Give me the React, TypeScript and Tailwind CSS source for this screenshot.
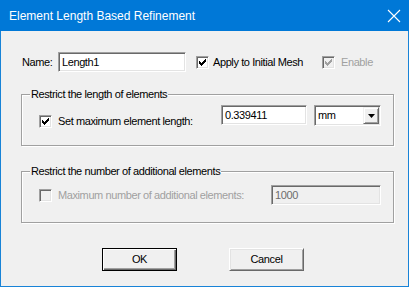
import React from 'react';

// Classic Win32 dialog — sunken edits, etched group boxes, raised buttons.
const sunken =
  'border border-t-[#a0a0a0] border-l-[#a0a0a0] border-b-white border-r-white shadow-[inset_1px_1px_0_#696969,inset_-1px_-1px_0_#e3e3e3]';

function Check({ checked, disabled }: { checked?: boolean; disabled?: boolean }) {
  return (
    <span
      className={`flex h-[13px] w-[13px] shrink-0 items-center justify-center ${sunken} ${
        disabled ? 'bg-[#f0f0f0]' : 'bg-white'
      }`}
    >
      {checked && (
        <svg width="7" height="7" viewBox="0 0 7 7">
          <path
            d="M0 2h1v1h1v1h1V3h1V2h1V1h1V0h1v3H6v1H5v1H4v1H3v1H2V6H1V5H0z"
            fill={disabled ? '#a0a0a0' : '#000'}
          />
        </svg>
      )}
    </span>
  );
}

function Group({ label, children }: { label: string; children: React.ReactNode }) {
  return (
    <div className="relative h-[52px] w-[373px] border border-[#a0a0a0] shadow-[inset_1px_1px_0_white,1px_1px_0_white]">
      <span className="absolute -top-[8px] left-[8px] bg-[#f0f0f0] px-[1px] leading-[14px] text-black">
        {label}
      </span>
      {children}
    </div>
  );
}

function Button({ label, isDefault }: { label: string; isDefault?: boolean }) {
  return (
    <button
      type="button"
      className={`flex h-[23px] w-[75px] items-center justify-center bg-[#f0f0f0] ${
        isDefault
          ? 'border border-black shadow-[inset_1px_1px_0_white,inset_-1px_-1px_0_#696969,inset_-2px_-2px_0_#a0a0a0]'
          : 'border border-t-white border-l-white border-b-[#696969] border-r-[#696969] shadow-[inset_1px_1px_0_#e3e3e3,inset_-1px_-1px_0_#a0a0a0]'
      }`}
    >
      {label}
    </button>
  );
}

export default function App() {
  return (
    <div
      className="flex h-[287px] w-[409px] flex-col border-x border-b border-[#1883d7] bg-[#f0f0f0] text-[11px] tracking-[-0.4px] text-black"
      style={{ fontFamily: '"Liberation Sans", Arial, sans-serif' }}
    >
      <div className="-mx-px flex h-[31px] items-center justify-between bg-[#0078d7] pl-[9px] pr-[7px] text-white">
        <span className="text-[12px] tracking-normal">Element Length Based Refinement</span>
        <svg width="14" height="14" viewBox="0 0 14 14" className="mr-[1px]">
          <path d="M1 1l12 12M13 1L1 13" stroke="white" strokeWidth="1.1" />
        </svg>
      </div>

      <div className="flex flex-col pl-[20px]">
        <div className="mt-[21px] flex h-[20px] items-center pl-[1px]">
          <span className="w-[36px]">Name:</span>
          <div className={`flex h-[20px] w-[128px] items-center bg-white pl-[3px] ${sunken}`}>Length1</div>
          <div className="ml-[10px] flex w-[126px] items-center gap-[4px]">
            <Check checked />
            <span>Apply to Initial Mesh</span>
          </div>
          <div className="flex items-center gap-[6px]">
            <Check checked disabled />
            <span className="text-[#a0a0a0]">Enable</span>
          </div>
        </div>

        <div className="mt-[22px]">
          <Group label="Restrict the length of elements">
            <div className="flex items-start pl-[17px] pt-[10px]">
              <div className="mt-[8px] flex w-[182px] items-center gap-[6px]">
                <Check checked />
                <span>Set maximum element length:</span>
              </div>
              <div className={`flex h-[20px] w-[86px] items-center bg-white pl-[3px] ${sunken}`}>0.339411</div>
              <div className={`ml-[7px] flex h-[21px] w-[67px] items-center bg-white pl-[3px] ${sunken}`}>
                <span className="flex-1">mm</span>
                <span className="mr-[1px] flex h-[17px] w-[16px] items-center justify-center border border-t-[#f0f0f0] border-l-[#f0f0f0] border-b-[#696969] border-r-[#696969] bg-[#f0f0f0] shadow-[inset_1px_1px_0_white,inset_-1px_-1px_0_#a0a0a0]">
                  <svg width="7" height="4" viewBox="0 0 7 4">
                    <path d="M0 0h7L3.5 4z" fill="black" />
                  </svg>
                </span>
              </div>
            </div>
          </Group>
        </div>

        <div className="mt-[25px]">
          <Group label="Restrict the number of additional elements">
            <div className="flex items-center pl-[17px] pt-[13px]">
              <div className="flex w-[232px] items-center gap-[6px]">
                <Check disabled />
                <span className="text-[#a0a0a0]">Maximum number of additional elements:</span>
              </div>
              <div className={`flex h-[20px] w-[110px] items-center bg-[#f0f0f0] pl-[3px] text-[#6d6d6d] ${sunken}`}>
                1000
              </div>
            </div>
          </Group>
        </div>

        <div className="mt-[25px] flex gap-[52px] pl-[81px]">
          <Button label="OK" isDefault />
          <Button label="Cancel" />
        </div>
      </div>
    </div>
  );
}
